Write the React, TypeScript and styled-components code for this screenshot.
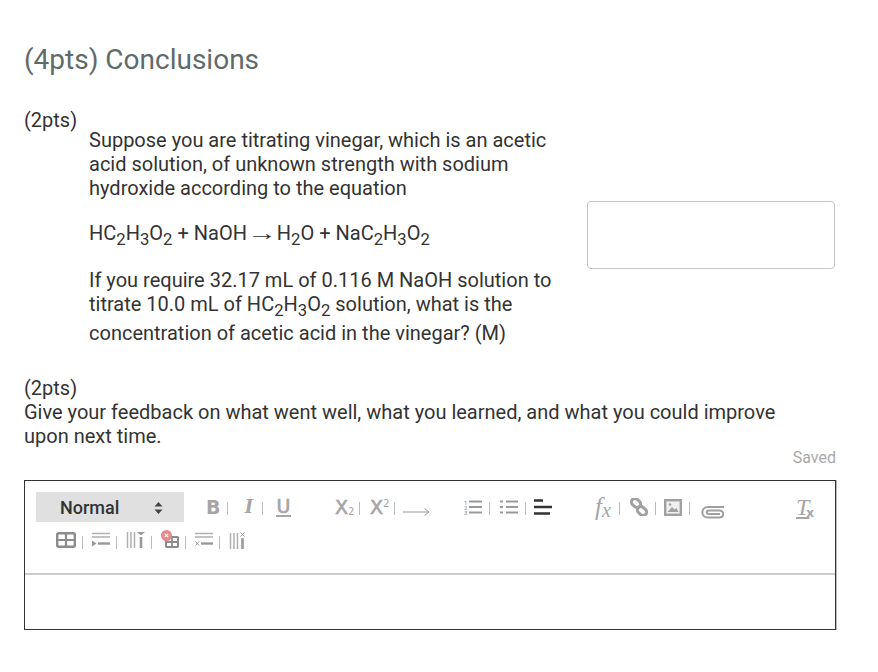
import React from "react";
import styled, { createGlobalStyle } from "styled-components";

const GlobalStyle = createGlobalStyle`
    html, body {
        margin: 0;
        padding: 0;
        background: #fff;
        font-family: Roboto, "Liberation Sans", sans-serif;
        color: #333;
    }
`;

function App() {
    return (
        <Page>
            <GlobalStyle />
            <Heading>(4pts) Conclusions</Heading>

            <Para>(2pts)</Para>
            <QuestionRow>
                <QuestionBody>
                    <Para>
                        Suppose you are titrating vinegar, which is an acetic acid solution, of unknown strength with sodium
                        hydroxide according to the equation
                    </Para>
                    <Equation>
                        HC<sub>2</sub>H<sub>3</sub>O<sub>2</sub> + NaOH <Arrow>→</Arrow> H<sub>2</sub>O + NaC<sub>2</sub>H<sub>3</sub>O<sub>2</sub>
                    </Equation>
                    <Para>
                        If you require 32.17 mL of 0.116 M NaOH solution to titrate 10.0 mL of HC<sub>2</sub>H<sub>3</sub>O<sub>2</sub> solution,
                        what is the concentration of acetic acid in the vinegar? (M)
                    </Para>
                </QuestionBody>
                <AnswerInput />
            </QuestionRow>

            <Feedback>
                <Para>(2pts)</Para>
                <Para>Give your feedback on what went well, what you learned, and what you could improve upon next time.</Para>
            </Feedback>
            <Saved>Saved</Saved>

            <Editor>
                <Toolbar>
                    <ToolRow>
                        <StyleSelect>
                            Normal
                            <svg width="9" height="14" viewBox="0 0 9 14"><path d="M4.5 1 L8.5 5.5 H0.5 Z M4.5 13 L8.5 8.5 H0.5 Z" fill="#444" /></svg>
                        </StyleSelect>
                        <BoldTool $ml={22} $w={14}>B</BoldTool>
                        <Sep />
                        <SerifTool $ml={5} $w={12}>I</SerifTool>
                        <Sep />
                        <UnderTool $ml={3} $w={15}>U</UnderTool>
                        <ScriptTool $ml={44} $w={17}>X<sub>2</sub></ScriptTool>
                        <Sep />
                        <ScriptTool $ml={0} $w={17}>X<sup>2</sup></ScriptTool>
                        <Sep />
                        <Icon $ml={-2} $mt={10} width="27" height="10" viewBox="0 0 27 10">
                            <path d="M0 5 H26 M21.5 1.5 L26 5 L21.5 8.5" fill="none" stroke="#999" />
                        </Icon>
                        <Icon $ml={34} $mt={0} width="18" height="16" viewBox="0 0 18 16">
                            <text x="0" y="5.5" fontSize="6" fill="#888">1</text>
                            <text x="0" y="11" fontSize="6" fill="#888">2</text>
                            <text x="0" y="16" fontSize="6" fill="#888">3</text>
                            <path d="M5 2.5 H18 M5 8 H18 M5 13.5 H18" stroke="#999" strokeWidth="2" />
                        </Icon>
                        <Sep />
                        <Icon $ml={0} $mt={0} width="18" height="16" viewBox="0 0 18 16">
                            <path d="M0 2.5 H3 M0 8 H3 M0 13.5 H3 M6 2.5 H18 M6 8 H18 M6 13.5 H18" stroke="#999" strokeWidth="2" />
                        </Icon>
                        <Sep />
                        <Icon $ml={-2} $mt={0} width="18" height="16" viewBox="0 0 18 16">
                            <path d="M0 1.5 H9 M0 8 H18 M0 14.5 H16" stroke="#333" strokeWidth="2.4" />
                        </Icon>
                        <FormulaTool $ml={43} $w={17}>f<sub>x</sub></FormulaTool>
                        <Sep />
                        <Icon $ml={0} $mt={0} width="18" height="18" viewBox="0 0 18 18">
                            <g fill="none" stroke="#a0a0a0" strokeWidth="3">
                                <rect x="1" y="1.5" width="10" height="7" rx="3.5" transform="rotate(42 6 5)" />
                                <rect x="7" y="9.5" width="10" height="7" rx="3.5" transform="rotate(42 12 13)" />
                            </g>
                        </Icon>
                        <Sep />
                        <Icon $ml={-2} $mt={0} width="18" height="17" viewBox="0 0 18 17">
                            <rect x="1.2" y="1.2" width="15.6" height="14.6" fill="#f0f0f0" stroke="#a0a0a0" strokeWidth="2.4" />
                            <path d="M3.5 13 L8 8 L10.5 10.5 L12.5 9 L14.5 13 Z" fill="#a0a0a0" />
                            <circle cx="6" cy="5.5" r="1.3" fill="#a0a0a0" />
                        </Icon>
                        <Sep />
                        <Icon $ml={0} $mt={8} width="25" height="15" viewBox="0 0 25 15">
                            <path d="M24 3 H8 C0.5 3 0.5 13.5 8 13.5 H19 C24.5 13.5 24.5 6.5 19 6.5 H9 C6 6.5 6 10 9 10 H20" fill="none" stroke="#a0a0a0" strokeWidth="2" />
                        </Icon>
                        <ClearTool $ml={71} $w={17}>T<sub>x</sub></ClearTool>
                    </ToolRow>
                    <TableRow>
                        <Icon $ml={20} $mt={0} width="20" height="16" viewBox="0 0 20 16">
                            <rect x="1.2" y="1.2" width="17.6" height="13.6" rx="1.5" fill="none" stroke="#8c8c8c" strokeWidth="2.4" />
                            <path d="M1 8 H19 M10 1 V15" stroke="#8c8c8c" strokeWidth="2.2" />
                        </Icon>
                        <TableSep />
                        <Icon $ml={0} $mt={0} width="18" height="16" viewBox="0 0 18 16">
                            <path d="M0 1.5 H18 M0 5 H18" stroke="#b0b0b0" strokeWidth="1.5" />
                            <path d="M0 8.5 L4.5 11.5 L0 14.5 Z" fill="#999" />
                            <path d="M6 11.5 H18" stroke="#999" strokeWidth="2.4" />
                        </Icon>
                        <TableSep />
                        <Icon $ml={0} $mt={0} width="19" height="16" viewBox="0 0 19 16">
                            <path d="M1.5 0 V16 M5 0 V16 M8.5 0 V16" stroke="#b0b0b0" strokeWidth="1.5" />
                            <path d="M11 0 H19 L15 3.5 Z" fill="#999" />
                            <path d="M15 5 V16" stroke="#999" strokeWidth="2.6" />
                        </Icon>
                        <TableSep />
                        <Icon $ml={0} $mt={-2} width="18" height="18" viewBox="0 0 18 18">
                            <rect x="5" y="7" width="12" height="10" rx="1" fill="none" stroke="#8c8c8c" strokeWidth="2.2" />
                            <path d="M5 12 H17 M11 7 V17" stroke="#8c8c8c" strokeWidth="1.8" />
                            <circle cx="5.5" cy="5.5" r="5.5" fill="#e58a8a" />
                            <path d="M3.8 3.8 L7.2 7.2 M7.2 3.8 L3.8 7.2" stroke="#fff" strokeWidth="1.2" />
                        </Icon>
                        <TableSep />
                        <Icon $ml={0} $mt={0} width="18" height="16" viewBox="0 0 18 16">
                            <path d="M0 1.5 H18 M0 5 H18" stroke="#b0b0b0" strokeWidth="1.5" />
                            <path d="M0.5 9.5 L4 13.5 M4 9.5 L0.5 13.5" stroke="#999" />
                            <path d="M6 11.5 H18" stroke="#999" strokeWidth="2.4" />
                        </Icon>
                        <TableSep />
                        <Icon $ml={0} $mt={0} width="17" height="17" viewBox="0 0 17 17">
                            <path d="M1.5 1 V17 M5 1 V17 M8.5 1 V17" stroke="#b0b0b0" strokeWidth="1.5" />
                            <path d="M11.5 0.5 L15.5 4.5 M15.5 0.5 L11.5 4.5" stroke="#999" />
                            <path d="M13.5 6 V17" stroke="#999" strokeWidth="2.6" />
                        </Icon>
                    </TableRow>
                </Toolbar>
                <EditArea />
            </Editor>
        </Page>
    );
}

const Page = styled.div`
    box-sizing: border-box;
    width: 878px;
    height: 672px;
    padding: 43px 42px 0 24px;
    font-size: 20px;
    line-height: 24px;
    overflow: hidden;
    sub {
        line-height: 20px;
    }
`;

const Heading = styled.h2`
    margin: 0 0 31px;
    font-size: 28px;
    line-height: 34px;
    font-weight: 400;
    color: #5f6a6a;
`;

const QuestionRow = styled.div`
    display: flex;
    align-items: center;
    justify-content: space-between;
    padding-left: 65px;
    margin-top: -4px;
`;

const QuestionBody = styled.div`
    width: 470px;
`;

const Para = styled.p`
    margin: 0;
`;

const Equation = styled.p`
    margin: 21px 0 18px;
`;

const Arrow = styled.span`
    display: inline-block;
    font-family: "Liberation Serif", serif;
    font-weight: 400;
    transform: scaleX(1.5);
`;

const AnswerInput = styled.div`
    box-sizing: border-box;
    width: 248px;
    height: 68px;
    margin-right: 1px;
    margin-bottom: 4px;
    border: 1px solid #c4c4c4;
    border-radius: 4px;
`;

const Feedback = styled.div`
    margin-top: 31px;
    width: 790px;
`;

const Saved = styled.div`
    margin-top: 1px;
    font-size: 16px;
    line-height: 18px;
    text-align: right;
    color: #a9a9a9;
`;

const Editor = styled.div`
    box-sizing: border-box;
    height: 150px;
    margin-top: 13px;
    border: 1px solid #333;
    box-shadow: 1px 0 0 #bbb;
    display: flex;
    flex-direction: column;
`;

const Toolbar = styled.div`
    box-sizing: border-box;
    height: 94px;
    padding: 11px 11px 0;
    border-bottom: 2px solid #ccc;
`;

const ToolRow = styled.div`
    display: flex;
    align-items: center;
    height: 30px;
`;

const TableRow = styled(ToolRow)`
    height: 18px;
    margin-top: 9px;
`;

const EditArea = styled.div`
    flex: 1;
`;

const StyleSelect = styled.div`
    box-sizing: border-box;
    width: 148px;
    height: 30px;
    padding: 1px 21px 0 24px;
    display: flex;
    align-items: center;
    justify-content: space-between;
    background: #e0e0e0;
    font-size: 18px;
    font-weight: 500;
    color: #333;
`;

const Sep = styled.span`
    flex: none;
    width: 1px;
    height: 13px;
    margin: 2px 10px 0 7px;
    background: #bbb;
`;

const TableSep = styled(Sep)`
    margin: 4px 9px 0 6px;
`;

const Tool = styled.span<{ $ml: number; $w: number }>`
    flex: none;
    width: ${(p) => p.$w}px;
    margin-left: ${(p) => p.$ml}px;
    line-height: 20px;
    color: #a6a6a6;
    white-space: nowrap;
`;

const BoldTool = styled(Tool)`
    font-family: "DejaVu Sans", sans-serif;
    font-size: 19px;
    font-weight: 700;
    text-align: center;
`;

const UnderTool = styled(BoldTool)`
    font-weight: 400;
    -webkit-text-stroke: 0.7px #a6a6a6;
    border-bottom: 2px solid #a6a6a6;
    line-height: 18px;
`;

const SerifTool = styled(Tool)`
    font-family: "DejaVu Serif", serif;
    font-size: 18px;
    font-style: italic;
    font-weight: 700;
    text-align: center;
`;

const ScriptTool = styled(Tool)`
    font-family: "DejaVu Sans", sans-serif;
    font-size: 19px;
    -webkit-text-stroke: 0.6px #a6a6a6;
    sub, sup {
        font-size: 10px;
        line-height: 0;
        -webkit-text-stroke: 0;
    }
    sub {
        vertical-align: -1px;
    }
`;

const FormulaTool = styled(Tool)`
    font-family: "Liberation Serif", serif;
    font-size: 25px;
    font-style: italic;
    sub {
        font-size: 20px;
        line-height: 0;
        vertical-align: -2px;
    }
`;

const ClearTool = styled(FormulaTool)`
    font-size: 24px;
    text-decoration: underline;
    sub {
        display: inline-block;
        margin-left: -3px;
        font-family: "DejaVu Sans", sans-serif;
        font-weight: 700;
        font-style: normal;
        font-size: 12px;
    }
`;

const Icon = styled.svg<{ $ml: number; $mt: number }>`
    flex: none;
    display: block;
    margin-left: ${(p) => p.$ml}px;
    margin-top: ${(p) => p.$mt}px;
`;

export default App;
